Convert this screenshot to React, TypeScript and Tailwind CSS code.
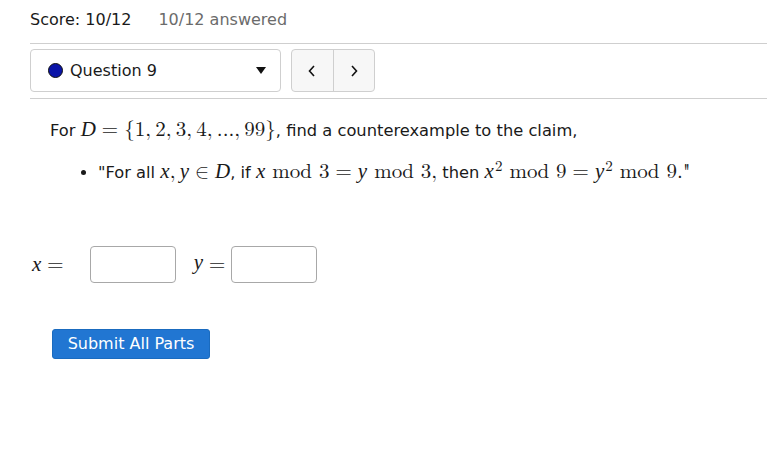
import React from "react";

const up = "font-['Latin_Modern_Math','Liberation_Serif','DejaVu_Serif',serif] text-[21px] leading-none";
const it = "font-['Liberation_Serif','DejaVu_Serif',serif] italic text-[21px] leading-none";

function V({ children }: { children: React.ReactNode }) {
  return <span className={it}>{children}</span>;
}
function R({ children }: { children: React.ReactNode }) {
  return <span className={up}>{children}</span>;
}
function Rel({ children }: { children: React.ReactNode }) {
  return <span className={`${up} mx-[6px]`}>{children}</span>;
}
function Mod({ n }: { n: string }) {
  return <span className={`${up} ml-[7px]`}>mod {n}</span>;
}
function Sq() {
  return <sup className="font-['Latin_Modern_Math','Liberation_Serif',serif] text-[15px] ml-[1px]">2</sup>;
}

export default function App() {
  return (
    <div className="min-h-[453px] bg-white font-['DejaVu_Sans',sans-serif] text-[16px] text-[#1a1a1a]">
      <div className="pl-[30px]">
        <div className="flex items-center gap-[27px] pt-[8px] pb-[11px]">
          <span>Score: 10/12</span>
          <span className="text-[#6b6b6b]">10/12 answered</span>
        </div>
        <div className="border-t border-[#cfcfcf]" />
        <div className="flex items-center gap-[10px] pt-[5px] pb-[6px]">
          <div className="flex h-[43px] w-[251px] items-center rounded-[4px] border border-[#cfcfcf] pl-[17px] pr-[12px]">
            <span className="h-[15px] w-[15px] rounded-full border border-[#111] bg-[#0a14a8]" />
            <span className="ml-[7px] flex-1">Question 9</span>
            <svg width="10" height="7" viewBox="0 0 10 7" className="mr-[2px]">
              <path d="M0 0h10L5 7z" fill="#111" />
            </svg>
          </div>
          <div className="flex h-[43px] w-[84px] rounded-[4px] border border-[#cfcfcf] bg-[#f7f7f7]">
            <button className="flex flex-1 items-center justify-center border-r border-[#cfcfcf]">
              <svg width="8" height="12" viewBox="0 0 8 12"><path d="M6 1L1.5 6 6 11" fill="none" stroke="#111" strokeWidth="1.6" /></svg>
            </button>
            <button className="flex flex-1 items-center justify-center">
              <svg width="8" height="12" viewBox="0 0 8 12"><path d="M2 1l4.5 5L2 11" fill="none" stroke="#111" strokeWidth="1.6" /></svg>
            </button>
          </div>
        </div>
        <div className="border-t border-[#cfcfcf]" />
      </div>

      <div className="pl-[50px] pt-[18px] text-[16.3px]">
        <p className="leading-[28px]">
          For <V>D</V>
          <Rel>=</Rel>
          <R>{"{"}1,&thinsp;2,&thinsp;3,&thinsp;4,&thinsp;...,&thinsp;99{"}"}</R>, find a counterexample to the claim,
        </p>
        <ul className="mt-[14px] list-disc pl-[48px]">
          <li className="leading-[28px]">
            "For all <V>x</V>
            <R>,&thinsp;</R>
            <V>y</V>
            <Rel>∈</Rel>
            <V>D</V>, if <V>x</V>
            <Mod n="3" />
            <Rel>=</Rel>
            <V>y</V>
            <Mod n="3" />
            <R>,</R> then <V>x</V>
            <Sq />
            <Mod n="9" />
            <Rel>=</Rel>
            <V>y</V>
            <Sq />
            <Mod n="9" />
            <R>."</R>
          </li>
        </ul>

        <div className="mt-[59px] -ml-[18px] flex items-center">
          <V>x</V>
          <Rel>=</Rel>
          <input className="ml-[20px] h-[37px] w-[86px] rounded-[4px] border border-[#a8a8a8] outline-none" />
          <span className="ml-[18px]">
            <V>y</V>
          </span>
          <Rel>=</Rel>
          <input className="h-[37px] w-[86px] rounded-[4px] border border-[#a8a8a8] outline-none" />
        </div>

        <button className="mt-[46px] ml-[2px] h-[30px] w-[158px] rounded-[3px] border border-[#1a6bbf] bg-[#2176d2] text-[16px] text-white">
          Submit All Parts
        </button>
      </div>
    </div>
  );
}
